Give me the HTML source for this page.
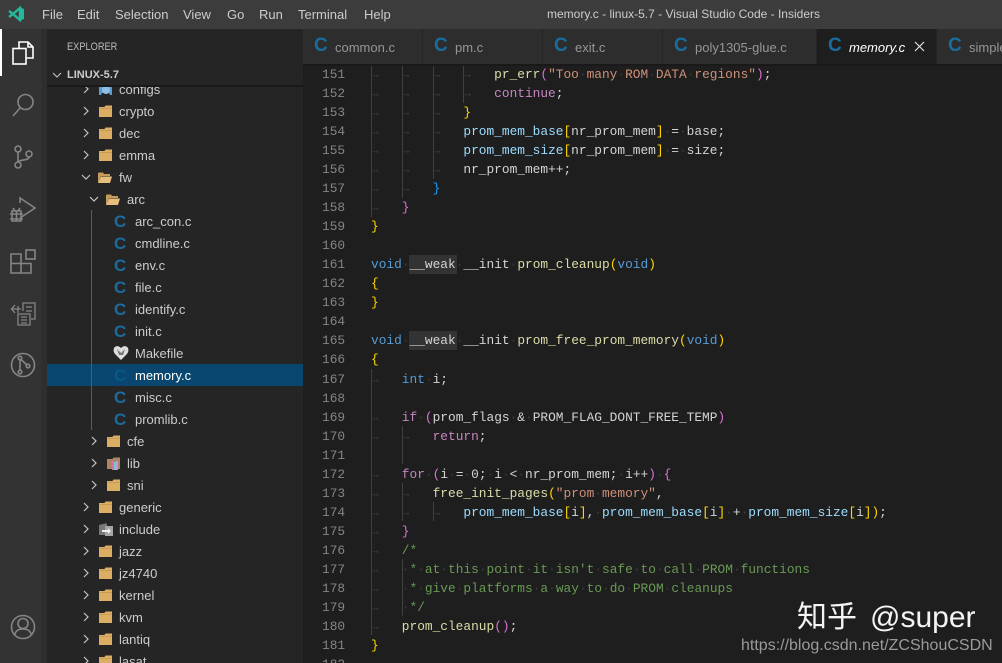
<!DOCTYPE html>
<html><head><meta charset="utf-8"><style>
*{box-sizing:border-box}
html,body{margin:0;padding:0;width:1002px;height:663px;overflow:hidden;background:#1e1e1e}
body{position:relative;font-family:"Liberation Sans","Noto Sans CJK SC",sans-serif;font-size:13px;color:#ccc}
#wrap{position:absolute;left:0;top:0;width:1002px;height:663px;overflow:hidden;filter:blur(.3px)}
.a{position:absolute;white-space:nowrap}
#title{left:0;top:0;width:1002px;height:29px;background:#3c3c3c}
#title span{position:absolute;top:6px;line-height:17px;color:#ccc;font-size:13px}
#act{left:0;top:29px;width:47px;height:634px;background:linear-gradient(90deg,#333 0,#333 41px,#2e2e2e 42px)}
#side{left:47px;top:29px;width:256px;height:634px;background:#252526;overflow:hidden}
#tree{position:absolute;left:-47px;top:-29px;width:303px;height:663px;clip-path:inset(86px 0 0 0)}
.r{position:absolute;height:22px;line-height:24px;color:#ccc;font-size:13px}
.c{position:absolute;left:114px;font:bold 17px/23px "Liberation Sans",sans-serif;color:#1a6c9e}
.tab{position:absolute;top:29px;height:35px;background:#2d2d2d;border-right:1px solid #252526;color:#969696;line-height:37px;font-size:13px}
.tab b{position:absolute;left:11px;top:-1px;font:bold 19px/36px "Liberation Sans",sans-serif;color:#1a6c9e}
.tab span{position:absolute;left:32px}
pre{margin:0;font-family:"Liberation Mono",monospace;font-size:12.83px;line-height:19.03px;position:absolute}
#code{left:371px;top:65px;color:#d4d4d4}
#nums{left:322px;top:65px;color:#858585}
pre i{font-style:normal;color:#3c3c3c}
.k{color:#c586c0}.t{color:#569cd6}.f{color:#dcdcaa}.v{color:#9cdcfe}.s{color:#ce9178}.m{color:#6a9955}
.y{color:#ffd700}.p{color:#da70d6}.u{color:#179fff}
.g{position:absolute;width:1px;background:#404040}
</style></head><body><div id="wrap">
<div class="a" id="title">
<svg class="a" style="left:8px;top:6px" width="18" height="16" viewBox="0 0 18 16"><path d="M1 5L5 8L1 11M5 8L12 2V14Z" fill="none" stroke="#23b99c" stroke-width="2.4"/><path d="M12 1.500L16 3V13L12 14.500Z" fill="#23b99c"/></svg>
<span style="left:42px">File</span><span style="left:77px">Edit</span><span style="left:115px">Selection</span><span style="left:183px">View</span><span style="left:227px">Go</span><span style="left:259px">Run</span><span style="left:298px">Terminal</span><span style="left:364px">Help</span>
<span style="left:547px;font-size:12px;top:6px">memory.c - linux-5.7 - Visual Studio Code - Insiders</span>
</div>
<div class="a" id="act"></div>
<svg class="a" style="left:0;top:0" width="47" height="663" viewBox="0 0 47 663" fill="none" stroke="#858585" stroke-width="1.600">
<rect x="0" y="29" width="2" height="47" fill="#fff" stroke="none"/>
<g stroke="#fff"><rect x="13" y="48.500" width="13" height="15.500"/><path d="M19 48V42H28L33 47V58H26M28 42V47H33"/></g>
<circle cx="25.500" cy="102" r="7.500"/><path d="M20 108L13 116"/>
<circle cx="18" cy="149" r="3"/><circle cx="18" cy="165" r="3"/><circle cx="29" cy="154" r="3"/><path d="M18 152V162M29 157C29 161 20 159 18.500 162"/>
<path d="M20 203V198L35 208L20 218" /><path d="M12 211H21V221H12ZM10 214H23M10 219H23M13 208L15 211M20 208L18 211M16.500 211V221"/>
<path d="M11 254H21V273H11ZM11 263.500H31V273H21"/><rect x="26" y="250" width="9" height="9"/>
<path d="M21 309H12M15 305L11.500 309L15 313M18 306V313M18 314H30V325H18ZM21 317H27M21 320H27M21 323H27M23 311V303H35V319H31M26 307H32M26 311H32" stroke-width="1.300"/>
<circle cx="23" cy="365" r="11.500"/><circle cx="20" cy="358" r="1.800"/><circle cx="20" cy="372" r="1.800"/><circle cx="28" cy="366" r="1.800"/><path d="M20 359V371M20.500 359L27 365"/>
<circle cx="23" cy="627" r="11.500"/><circle cx="23" cy="623.500" r="5"/><path d="M14.500 635C16 630 19 629 23 629C27 629 30 630 31.500 635"/>
</svg>
<div class="a" id="side"></div>
<div class="a" style="left:67px;top:39px;font-size:11px;line-height:16px;color:#bbb;z-index:3;transform:scaleX(.84);transform-origin:0 0">EXPLORER</div>
<div class="a" style="left:67px;top:67px;font-size:11px;line-height:16px;font-weight:bold;color:#ccc;z-index:3">LINUX-5.7</div>
<svg class="a" style="left:51px;top:69px;z-index:3" width="12" height="12"><path d="M2 4L6 8L10 4" fill="none" stroke="#c5c5c5" stroke-width="1.100"/></svg>
<div class="a" style="left:47px;top:85px;width:256px;height:2px;background:#191919;z-index:3"></div>
<div class="a" id="tree" style="left:0;top:0">
<div class="a" style="left:47px;top:364px;width:256px;height:22px;background:#094771"></div>
<div class="a" style="left:91px;top:210px;width:1px;height:220px;background:#5a5a5a"></div>
<svg class="a" style="left:0;top:0" width="303" height="663" fill="none" stroke="#c5c5c5" stroke-width="1.200">
<defs>
<g id="fc"><path d="M0 2V12H13V0.500H6.500L5.500 2Z" fill="#dcae64" stroke="none"/><path d="M0.500 3.500H13" stroke="#c6974f" stroke-width=".8"/></g>
<g id="fo"><path d="M1 1.500H5L6 3H12V5H3L0 12V2Z" fill="#c79c58" stroke="none"/><path d="M3 5.500H14L12 12H0Z" fill="#e6bd7c" stroke="none"/></g>
</defs>
<path d="M84 85L88 89L84 93M84 107L88 111L84 115M84 129L88 133L84 137M84 151L88 155L84 159"/>
<path d="M82 175L86 179L90 175M90 197L94 201L98 197"/>
<path d="M92 437L96 441L92 445M92 459L96 463L92 467M92 481L96 485L92 489"/>
<path d="M84 503L88 507L84 511M84 525L88 529L84 533M84 547L88 551L84 555M84 569L88 573L84 577M84 591L88 595L84 599M84 613L88 617L84 621M84 635L88 639L84 643M84 657L88 661L84 665"/>
<g stroke="none">
<path d="M99 87H112V95H110L109 93H102L101 95H99Z" fill="#5d9ccc"/><circle cx="106" cy="90" r="4" fill="#8cc0e8"/>
<use href="#fc" x="99" y="105"/><use href="#fc" x="99" y="127"/><use href="#fc" x="99" y="149"/>
<use href="#fo" x="98" y="171"/><use href="#fo" x="106" y="193"/>
<use href="#fc" x="107" y="435"/><use href="#fc" x="107" y="479"/>
<path d="M107 459V469H120V457.500H113.500L112.500 459Z" fill="#a9866a"/><rect x="112" y="461" width="2" height="9" fill="#e06ca0"/><rect x="114" y="462" width="2" height="8" fill="#6fd0c8"/><rect x="116" y="461" width="2" height="9" fill="#b89adf"/>
<use href="#fc" x="99" y="501"/>
<path d="M99 525V535H107V523.500H105Z" fill="#777"/><rect x="105" y="526" width="8" height="10" fill="#a5a5a5"/><path d="M102 530H108V528L111 531L108 534V532H102Z" fill="#eee"/>
<use href="#fc" x="99" y="545"/><use href="#fc" x="99" y="567"/><use href="#fc" x="99" y="589"/><use href="#fc" x="99" y="611"/><use href="#fc" x="99" y="633"/><use href="#fc" x="99" y="655"/>
<path d="M114 348C116 345 119 346 121 348C123 346 126 345 128 348C129 351 128 353 126 355L121 360L116 355C114 353 113 351 114 348Z" fill="#ddd"/><path d="M117 349L121 353L125 349L123 355H119Z" fill="#777"/>
</g></svg>
<div class="r" style="left:119px;top:78px">configs</div>
<div class="r" style="left:119px;top:100px">crypto</div>
<div class="r" style="left:119px;top:122px">dec</div>
<div class="r" style="left:119px;top:144px">emma</div>
<div class="r" style="left:119px;top:166px">fw</div>
<div class="r" style="left:127px;top:188px">arc</div>
<div class="c" style="top:210px">C</div><div class="r" style="left:135px;top:210px">arc_con.c</div>
<div class="c" style="top:232px">C</div><div class="r" style="left:135px;top:232px">cmdline.c</div>
<div class="c" style="top:254px">C</div><div class="r" style="left:135px;top:254px">env.c</div>
<div class="c" style="top:276px">C</div><div class="r" style="left:135px;top:276px">file.c</div>
<div class="c" style="top:298px">C</div><div class="r" style="left:135px;top:298px">identify.c</div>
<div class="c" style="top:320px">C</div><div class="r" style="left:135px;top:320px">init.c</div>
<div class="r" style="left:135px;top:342px">Makefile</div>
<div class="c" style="top:364px;color:#0b5788">C</div><div class="r" style="left:135px;top:364px;color:#fff">memory.c</div>
<div class="c" style="top:386px">C</div><div class="r" style="left:135px;top:386px">misc.c</div>
<div class="c" style="top:408px">C</div><div class="r" style="left:135px;top:408px">promlib.c</div>
<div class="r" style="left:127px;top:430px">cfe</div>
<div class="r" style="left:127px;top:452px">lib</div>
<div class="r" style="left:127px;top:474px">sni</div>
<div class="r" style="left:119px;top:496px">generic</div>
<div class="r" style="left:119px;top:518px">include</div>
<div class="r" style="left:119px;top:540px">jazz</div>
<div class="r" style="left:119px;top:562px">jz4740</div>
<div class="r" style="left:119px;top:584px">kernel</div>
<div class="r" style="left:119px;top:606px">kvm</div>
<div class="r" style="left:119px;top:628px">lantiq</div>
<div class="r" style="left:119px;top:650px">lasat</div>
</div>

<div class="g" style="left:371px;top:65px;height:152px"></div>
<div class="g" style="left:402px;top:65px;height:133px"></div>
<div class="g" style="left:433px;top:65px;height:114px"></div>
<div class="g" style="left:463px;top:65px;height:38px"></div>
<div class="g" style="left:371px;top:369px;height:266px"></div>
<div class="g" style="left:402px;top:426px;height:38px"></div>
<div class="g" style="left:402px;top:483px;height:38px"></div>
<div class="g" style="left:402px;top:559px;height:57px"></div>
<div class="g" style="left:433px;top:502px;height:19px"></div>

<pre id="nums">151
152
153
154
155
156
157
158
159
160
161
162
163
164
165
166
167
168
169
170
171
172
173
174
175
176
177
178
179
180
181
182</pre>
<div class="a" style="left:409px;top:255px;width:48px;height:19px;background:#333"></div>
<div class="a" style="left:409px;top:331px;width:48px;height:19px;background:#333"></div>
<pre id="code"><i>→   →   →   →   </i><span class="f">pr_err</span><span class="p">(</span><span class="s">"Too<i>·</i>many<i>·</i>ROM<i>·</i>DATA<i>·</i>regions"</span><span class="p">)</span>;
<i>→   →   →   →   </i><span class="k">continue</span>;
<i>→   →   →   </i><span class="y">}</span>
<i>→   →   →   </i><span class="v">prom_mem_base</span><span class="y">[</span>nr_prom_mem<span class="y">]</span><i>·</i>=<i>·</i>base;
<i>→   →   →   </i><span class="v">prom_mem_size</span><span class="y">[</span>nr_prom_mem<span class="y">]</span><i>·</i>=<i>·</i>size;
<i>→   →   →   </i>nr_prom_mem++;
<i>→   →   </i><span class="u">}</span>
<i>→   </i><span class="p">}</span>
<span class="y">}</span>

<span class="t">void</span><i>·</i>__weak<i>·</i>__init<i>·</i><span class="f">prom_cleanup</span><span class="y">(</span><span class="t">void</span><span class="y">)</span>
<span class="y">{</span>
<span class="y">}</span>

<span class="t">void</span><i>·</i>__weak<i>·</i>__init<i>·</i><span class="f">prom_free_prom_memory</span><span class="y">(</span><span class="t">void</span><span class="y">)</span>
<span class="y">{</span>
<i>→   </i><span class="t">int</span><i>·</i>i;

<i>→   </i><span class="k">if</span><i>·</i><span class="p">(</span>prom_flags<i>·</i>&amp;<i>·</i>PROM_FLAG_DONT_FREE_TEMP<span class="p">)</span>
<i>→   →   </i><span class="k">return</span>;

<i>→   </i><span class="k">for</span><i>·</i><span class="p">(</span>i<i>·</i>=<i>·</i>0;<i>·</i>i<i>·</i>&lt;<i>·</i>nr_prom_mem;<i>·</i>i++<span class="p">)</span><i>·</i><span class="p">{</span>
<i>→   →   </i><span class="f">free_init_pages</span><span class="y">(</span><span class="s">"prom<i>·</i>memory"</span>,
<i>→   →   →   </i><span class="v">prom_mem_base</span><span class="y">[</span>i<span class="y">]</span>,<i>·</i><span class="v">prom_mem_base</span><span class="y">[</span>i<span class="y">]</span><i>·</i>+<i>·</i><span class="v">prom_mem_size</span><span class="y">[</span>i<span class="y">]</span><span class="y">)</span>;
<i>→   </i><span class="p">}</span>
<i>→   </i><span class="m">/*</span>
<i>→   ·</i><span class="m">*<i>·</i>at<i>·</i>this<i>·</i>point<i>·</i>it<i>·</i>isn't<i>·</i>safe<i>·</i>to<i>·</i>call<i>·</i>PROM<i>·</i>functions</span>
<i>→   ·</i><span class="m">*<i>·</i>give<i>·</i>platforms<i>·</i>a<i>·</i>way<i>·</i>to<i>·</i>do<i>·</i>PROM<i>·</i>cleanups</span>
<i>→   ·</i><span class="m">*/</span>
<i>→   </i><span class="f">prom_cleanup</span><span class="p">()</span>;
<span class="y">}</span></pre>

<div class="a" style="left:303px;top:29px;width:699px;height:35px;background:#252526"></div>
<div class="a" style="left:303px;top:64px;width:699px;height:2px;background:#191919"></div>
<div class="tab" style="left:303px;width:120px"><b>C</b><span>common.c</span></div>
<div class="tab" style="left:423px;width:120px"><b>C</b><span>pm.c</span></div>
<div class="tab" style="left:543px;width:120px"><b>C</b><span>exit.c</span></div>
<div class="tab" style="left:663px;width:154px"><b>C</b><span>poly1305-glue.c</span></div>
<div class="tab" style="left:817px;width:120px;background:#1e1e1e;color:#fff"><b>C</b><span style="font-style:italic">memory.c</span><svg class="a" style="left:97px;top:12px" width="11" height="11"><path d="M1 1L10 10M10 1L1 10" stroke="#e0e0e0" stroke-width="1.200"/></svg></div>
<div class="tab" style="left:937px;width:65px;overflow:hidden;border:0"><b>C</b><span>simple</span></div>

<div class="a" style="left:797px;top:599px;font-size:30px;line-height:38px;color:#f4f4f4;z-index:9">知乎</div>
<div class="a" style="left:870px;top:599px;font-size:30px;line-height:38px;color:#f4f4f4;z-index:9">@super</div>
<div class="a" style="left:741px;top:637px;font-size:16px;line-height:18px;color:#9a9a9a;z-index:9">https://blog.csdn.net/ZCShouCSDN</div>
</div></body></html>
